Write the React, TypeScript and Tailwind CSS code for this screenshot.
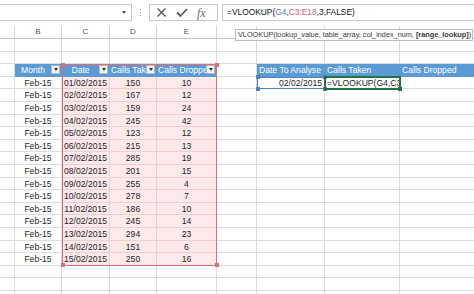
import React from 'react';

type Kind = 'plain' | 'pink' | 'blue';
type Cell = { text?: string; align?: 'left' | 'center' | 'right'; kind?: Kind; filter?: boolean };

const dates = [
  ['01/02/2015', '150', '10'],
  ['02/02/2015', '167', '12'],
  ['03/02/2015', '159', '24'],
  ['04/02/2015', '245', '42'],
  ['05/02/2015', '123', '12'],
  ['06/02/2015', '215', '13'],
  ['07/02/2015', '285', '19'],
  ['08/02/2015', '201', '15'],
  ['09/02/2015', '255', '4'],
  ['10/02/2015', '278', '7'],
  ['11/02/2015', '186', '10'],
  ['12/02/2015', '245', '14'],
  ['13/02/2015', '294', '23'],
  ['14/02/2015', '151', '6'],
  ['15/02/2015', '250', '16'],
];

const empty = (n: number): Cell[] => Array.from({ length: n }, () => ({}));

function buildRows(): Cell[][] {
  const rows: Cell[][] = [];
  rows.push(empty(9));
  rows.push(empty(9));
  rows.push([
    {},
    { text: 'Month', kind: 'blue', filter: true, align: 'center' },
    { text: 'Date', kind: 'blue', filter: true, align: 'center' },
    { text: 'Calls Taken', kind: 'blue', filter: true, align: 'center' },
    { text: 'Calls Dropped', kind: 'blue', filter: true, align: 'center' },
    {},
    { text: 'Date To Analyse', kind: 'blue', align: 'left' },
    { text: 'Calls Taken', kind: 'blue', align: 'left' },
    { text: 'Calls Dropped', kind: 'blue', align: 'left' },
  ]);
  dates.forEach(([d, t, dr], i) => {
    rows.push([
      {},
      { text: 'Feb-15', align: 'center' },
      { text: d, kind: 'pink', align: 'center' },
      { text: t, kind: 'pink', align: 'center' },
      { text: dr, kind: 'pink', align: 'center' },
      {},
      i === 0 ? { text: '02/02/2015', align: 'right' } : {},
      i === 0 ? { text: '=VLOOKUP(G4,C3:E', align: 'left' } : {},
      {},
    ]);
  });
  rows.push(empty(9));
  rows.push(empty(9));
  rows.push(empty(9));
  return rows;
}

const kindClass: Record<Kind, string> = {
  plain: 'bg-white border-[#DCDCDC] text-[#1f1f1f]',
  pink: 'bg-[#FCE9EA] border-[#F1CDD0] text-[#1f1f1f]',
  blue: 'bg-[#5B9BD5] border-[#5B9BD5] text-white',
};

function FilterButton() {
  return (
    <span className="shrink-0 w-[9px] h-[9px] mr-[1px] bg-[#F4F4F4] border border-[#B9B9B9] flex items-center justify-center">
      <span className="w-0 h-0 border-l-[2.5px] border-r-[2.5px] border-t-[3px] border-l-transparent border-r-transparent border-t-[#333]" />
    </span>
  );
}

function GridCell({ cell }: { cell: Cell }) {
  const kind = cell.kind ?? 'plain';
  const align = cell.align === 'right' ? 'text-right' : cell.align === 'center' ? 'text-center' : 'text-left';
  if (cell.filter) {
    return (
      <div className={`h-[12.6px] border-r border-b flex items-center overflow-hidden ${kindClass[kind]}`}>
        <span className={`flex-1 min-w-0 overflow-hidden whitespace-nowrap px-[1px] ${align}`}>{cell.text}</span>
        <FilterButton />
      </div>
    );
  }
  return (
    <div
      className={`h-[12.6px] border-r border-b overflow-hidden whitespace-nowrap leading-[12px] px-[2px] ${align} ${kindClass[kind]}`}
    >
      {cell.text}
    </div>
  );
}

function FormulaBar() {
  return (
    <div className="h-[26px] pt-[4px]">
      <div className="h-[17px] flex items-stretch">
        <div className="w-[132px] border border-l-0 border-[#C6C6C6] flex items-center justify-end pr-[5px]">
          <span className="w-0 h-0 border-l-[2.5px] border-r-[2.5px] border-t-[3px] border-l-transparent border-r-transparent border-t-[#555]" />
        </div>
        <div className="w-[17px] flex flex-col items-center justify-center gap-[2px]">
          <span className="w-[1px] h-[1px] bg-[#9a9a9a]" />
          <span className="w-[1px] h-[1px] bg-[#9a9a9a]" />
          <span className="w-[1px] h-[1px] bg-[#9a9a9a]" />
        </div>
        <div className="w-[69px] border border-[#C6C6C6] flex items-center pl-[6px] gap-[9px]">
          <svg width="11" height="11" viewBox="0 0 11 11">
            <path d="M1.5 1.5 L9.5 9.5 M9.5 1.5 L1.5 9.5" stroke="#5a5a5a" strokeWidth="1.4" fill="none" />
          </svg>
          <svg width="12" height="11" viewBox="0 0 12 11">
            <path d="M1 5.5 L4.5 9 L11 2" stroke="#5a5a5a" strokeWidth="1.8" fill="none" />
          </svg>
          <span className="font-['Liberation_Serif',serif] italic text-[12px] text-[#6a6a6a] leading-none">fx</span>
        </div>
        <div className="w-[4px]" />
        <div className="flex-1 border border-r-0 border-[#C6C6C6] flex items-center pl-[4px] text-[8.4px] text-[#111] whitespace-nowrap">
          <span>=VLOOKUP(</span>
          <span className="text-[#4F81BD]">G4</span>
          <span>,</span>
          <span className="text-[#D0606C]">C3:E18</span>
          <span>,3,FALSE)</span>
        </div>
      </div>
    </div>
  );
}

function ColumnHeaders() {
  // F to I sit under the function tooltip, so their letters never show
  const letters = ['', 'B', 'C', 'D', 'E', '', '', '', ''];
  return (
    <div className="h-[13px] grid grid-cols-[15px_47px_48px_47px_60px_40px_68px_75px_90px] border-b border-[#C4C4C4]">
      {letters.map((l, i) => (
        <div key={i} className="border-r border-[#D6D6D6] text-center text-[8px] leading-[12px] text-[#555]">
          {l}
        </div>
      ))}
    </div>
  );
}

function Handle({ className }: { className: string }) {
  return <span className={`absolute w-[4px] h-[4px] ${className}`} />;
}

export default function App() {
  const rows = buildRows();
  return (
    <div className="w-[474px] h-[294px] overflow-hidden bg-white relative font-['Liberation_Sans',Arial,sans-serif] text-[8.6px]">
      <FormulaBar />
      <ColumnHeaders />
      <div className="relative">
        <div className="grid grid-cols-[15px_47px_48px_47px_60px_40px_68px_75px_90px]">
          {rows.map((r, ri) => r.map((c, ci) => <GridCell key={`${ri}-${ci}`} cell={c} />))}
        </div>

        {/* selection C3:E18 */}
        <div className="absolute left-[62px] top-[25.2px] w-[155px] h-[201.6px] border border-[#DC6E7B] pointer-events-none">
          <Handle className="-left-[2.5px] -top-[2.5px] bg-[#DC6E7B]" />
          <Handle className="-right-[2.5px] -top-[2.5px] bg-[#DC6E7B]" />
          <Handle className="-left-[2.5px] -bottom-[2.5px] bg-[#DC6E7B]" />
          <Handle className="-right-[2.5px] -bottom-[2.5px] bg-[#DC6E7B]" />
        </div>

        {/* G4 reference */}
        <div className="absolute left-[257px] top-[37.8px] w-[68px] h-[12.6px] border border-[#4F81BD] pointer-events-none">
          <Handle className="-left-[2.5px] -top-[2.5px] bg-[#4F81BD]" />
          <Handle className="-right-[2.5px] -top-[2.5px] bg-[#4F81BD]" />
          <Handle className="-left-[2.5px] -bottom-[2.5px] bg-[#4F81BD]" />
          <Handle className="-right-[2.5px] -bottom-[2.5px] bg-[#4F81BD]" />
        </div>

        {/* active cell H4 */}
        <div className="absolute left-[324px] top-[37px] w-[77px] h-[14px] border-2 border-[#217346] pointer-events-none">
          <Handle className="-right-[3px] -bottom-[3px] bg-[#217346]" />
        </div>
      </div>

      {/* function tooltip */}
      <div className="absolute left-[235px] top-[29px] w-[238px] h-[12px] border border-[#BDBDBD] bg-[#FDFDFD] text-[7.3px] leading-[10px] text-[#3a3a3a] px-[2px] whitespace-nowrap overflow-hidden">
        VLOOKUP(lookup_value, table_array, col_index_num, <span className="font-bold">[range_lookup]</span>)
      </div>
    </div>
  );
}
